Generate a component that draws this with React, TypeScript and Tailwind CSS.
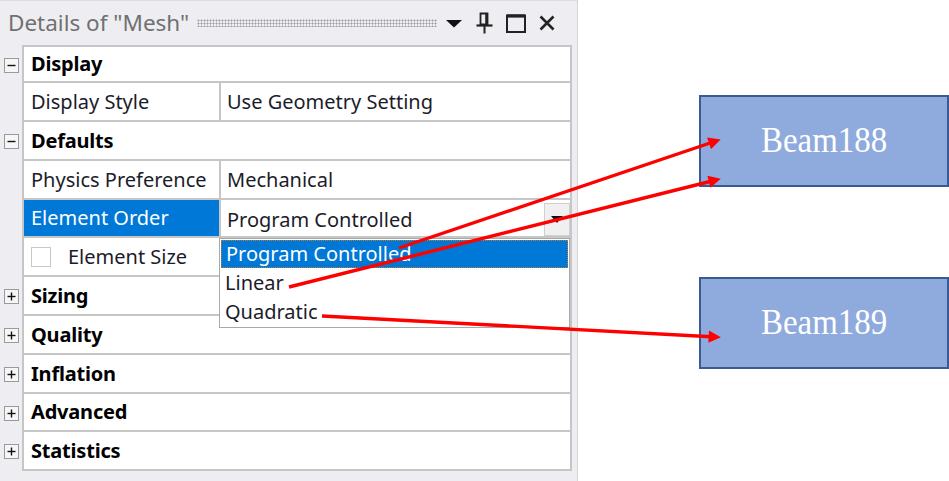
import React from 'react';

const uiFont = { fontFamily: '"Noto Sans", "Liberation Sans", sans-serif' };

function Expander({ open }: { open: boolean }) {
  return (
    <div className="flex h-[15px] w-[15px] items-center justify-center border border-[#9a9a9a] bg-[#f6f6f6]">
      <svg width="9" height="9" viewBox="0 0 9 9">
        <path d="M0.5 4.5h8" stroke="#111" strokeWidth="1.4" />
        {!open && <path d="M4.5 0.5v8" stroke="#111" strokeWidth="1.4" />}
      </svg>
    </div>
  );
}

function CategoryRow({ label, open, h }: { label: string; open: boolean; h: string }) {
  return (
    <div className={`flex ${h}`}>
      <div className="flex w-[22px] items-center justify-center">
        <Expander open={open} />
      </div>
      <div className="flex flex-1 items-center border-x-2 border-b-2 border-[#c6c6c6] bg-white pl-[7px] text-[20px] font-bold tracking-[-0.2px] text-black">
        {label}
      </div>
    </div>
  );
}

function PropRow({ label, value, h }: { label: React.ReactNode; value: string; h: string }) {
  return (
    <div className={`flex ${h}`}>
      <div className="w-[22px]" />
      <div className="flex flex-1 border-x-2 border-b-2 border-[#c6c6c6] bg-white text-[20px] text-[#1c1c2a]">
        <div className="flex w-[195px] items-center whitespace-nowrap pl-[7px]">{label}</div>
        <div className="flex flex-1 items-center border-l-2 border-[#c6c6c6] pl-[6px]">{value}</div>
      </div>
    </div>
  );
}

function HeaderIcons() {
  return (
    <div className="flex items-center gap-[13px] pr-[22px]">
      <svg width="18" height="9" viewBox="0 0 18 9">
        <path d="M1 1h16L9 8.5z" fill="#111" />
      </svg>
      <svg width="17" height="22" viewBox="0 0 17 22">
        <path d="M4.5 1.5h7v11h-7z" fill="none" stroke="#222" strokeWidth="1.8" />
        <path d="M10.5 1.5v11" stroke="#222" strokeWidth="2.6" />
        <path d="M0.5 13.5h16" stroke="#222" strokeWidth="2.2" />
        <path d="M8.5 13.5v8" stroke="#222" strokeWidth="2" />
      </svg>
      <svg width="20" height="20" viewBox="0 0 20 20">
        <path d="M1 2.5h18v16.5H1z" fill="none" stroke="#222" strokeWidth="2" />
        <path d="M1 3h18" stroke="#222" strokeWidth="3.2" />
      </svg>
      <svg width="16" height="16" viewBox="0 0 16 16">
        <path d="M1.5 1.5l13 13M14.5 1.5l-13 13" stroke="#222" strokeWidth="2.6" />
      </svg>
    </div>
  );
}

function DetailsPanel() {
  return (
    <div className="flex h-full w-[578px] shrink-0 flex-col border-r border-[#d4d4d8] bg-[#eeeef2]" style={uiFont}>
      <div className="flex h-[45px] items-center border-t border-[#dcdce2] pl-[8px]">
        <span className="whitespace-nowrap text-[22.5px] text-[#707070]">Details of "Mesh"</span>
        <div className="mx-[8px] h-[8px] flex-1 bg-[radial-gradient(#9c9c9c_0.9px,transparent_1.1px)] bg-[length:3px_3px]" />
        <HeaderIcons />
      </div>

      <div className="flex w-[572px] flex-col">
        <div className="ml-[22px] h-0 border-t-2 border-[#c6c6c6]" />
        <CategoryRow label="Display" open h="h-[36px]" />
        <PropRow label="Display Style" value="Use Geometry Setting" h="h-[39px]" />
        <CategoryRow label="Defaults" open h="h-[39px]" />
        <PropRow label="Physics Preference" value="Mechanical" h="h-[39px]" />

        <div className="relative flex h-[38px]">
          <div className="w-[22px]" />
          <div className="flex flex-1 border-x-2 border-b-2 border-[#c6c6c6] bg-white text-[20px]">
            <div className="flex w-[195px] items-center bg-[#0078d7] pl-[7px] text-white">Element Order</div>
            <div className="flex flex-1 items-stretch border-l-2 border-[#c6c6c6] pt-[3px]">
              <div className="flex flex-1 items-center pl-[6px] text-[#1c1c2a]">Program Controlled</div>
              <div className="flex w-[26px] items-center justify-center border border-[#d0d0d0] bg-[#f0f0f0]">
                <svg width="12" height="7" viewBox="0 0 12 7">
                  <path d="M0 0h12L6 7z" fill="#111" />
                </svg>
              </div>
            </div>
          </div>

          <div className="absolute left-[219px] top-[38px] z-10 flex h-[90px] w-[351px] flex-col border border-[#a9a9a9] bg-white pt-[1px] text-[20px] text-[#1c1c2a]">
            <div className="mx-[1px] flex h-[28px] items-center border border-dotted border-[#c07a30] bg-[#0078d7] pl-[4px] text-white">
              Program Controlled
            </div>
            <div className="flex h-[29px] items-center pl-[5px]">Linear</div>
            <div className="flex h-[29px] items-center pl-[5px]">Quadratic</div>
          </div>
        </div>

        <PropRow
          label={
            <div className="flex items-center">
              <div className="h-[20px] w-[20px] border border-[#c8c8c8] bg-white" />
              <span className="pl-[17px]">Element Size</span>
            </div>
          }
          value=""
          h="h-[39px]"
        />
        <CategoryRow label="Sizing" open={false} h="h-[39px]" />
        <CategoryRow label="Quality" open={false} h="h-[39px]" />
        <CategoryRow label="Inflation" open={false} h="h-[39px]" />
        <CategoryRow label="Advanced" open={false} h="h-[38px]" />
        <CategoryRow label="Statistics" open={false} h="h-[39px]" />
      </div>
    </div>
  );
}

function BeamBox({ label }: { label: string }) {
  return (
    <div
      className="flex h-[92px] w-[250px] items-center justify-center border-2 border-[#3a5a96] bg-[#8faadc] text-[35px] text-white"
      style={{ fontFamily: '"Liberation Serif", "DejaVu Serif", serif' }}
    >
      <span className="scale-x-[0.94]">{label}</span>
    </div>
  );
}

function Arrows() {
  const lines = [
    [399, 248, 716, 141],
    [289, 287, 716, 180],
    [322, 316, 716, 337],
  ];
  return (
    <svg className="pointer-events-none absolute inset-0 z-20" width="949" height="481" viewBox="0 0 949 481">
      <defs>
        <marker id="head" viewBox="0 0 10 10" refX="6" refY="5" markerWidth="4.2" markerHeight="3.6" orient="auto">
          <path d="M0 0L10 5L0 10z" fill="#ff0000" />
        </marker>
      </defs>
      {lines.map(([x1, y1, x2, y2], i) => (
        <line key={i} x1={x1} y1={y1} x2={x2} y2={y2} stroke="#ff0000" strokeWidth="3.4" markerEnd="url(#head)" />
      ))}
    </svg>
  );
}

export default function App() {
  return (
    <div className="relative flex h-[481px] w-[949px] overflow-hidden bg-white">
      <DetailsPanel />
      <div className="flex flex-col gap-[90px] pl-[121px] pt-[95px]">
        <BeamBox label="Beam188" />
        <BeamBox label="Beam189" />
      </div>
      <Arrows />
    </div>
  );
}
